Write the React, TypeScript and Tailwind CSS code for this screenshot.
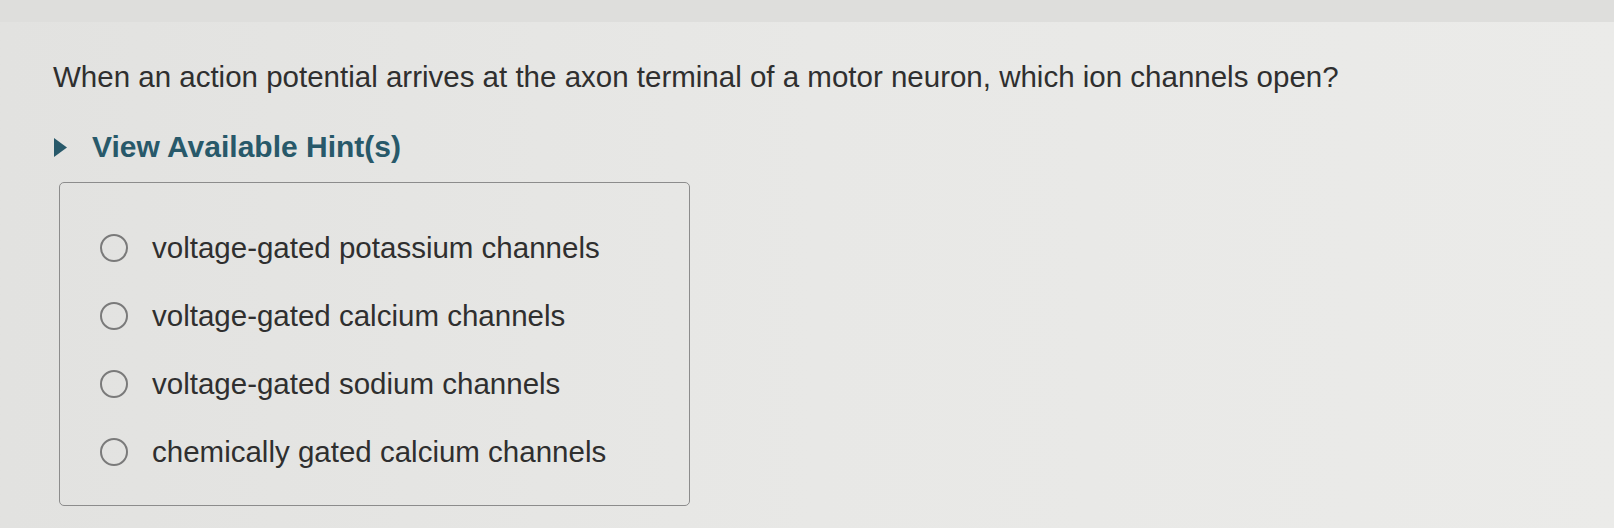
import { useState } from "react";

const options = [
    "voltage-gated potassium channels",
    "voltage-gated calcium channels",
    "voltage-gated sodium channels",
    "chemically gated calcium channels",
];

export default function App() {
    const [picked, setPicked] = useState<number | null>(null);
    const [hintOpen, setHintOpen] = useState(false);

    return (
        <div className="w-[1614px] h-[528px] overflow-hidden bg-gradient-to-r from-[#e2e2e0] via-[#e8e8e6] to-[#ebebe9] font-['Liberation_Sans',Arial,sans-serif] text-[#2f2f2f]">
            <div className="h-[22px] bg-[#dededc]" />
            <div className="pl-[53px] pt-[38px]">
                <p className="text-[29.5px] leading-[34px]">
                    When an action potential arrives at the axon terminal of a motor neuron, which ion channels open?
                </p>

                <button
                    onClick={() => setHintOpen((v) => !v)}
                    className="mt-[36px] flex items-center gap-[24px] text-[#28596a]"
                >
                    <svg width="15" height="21" viewBox="0 0 15 21" className="shrink-0">
                        <path d="M1 1 L14 10.5 L1 20 Z" fill="currentColor" />
                    </svg>
                    <span className="text-[30px] leading-[34px] font-bold">View Available Hint(s)</span>
                </button>

                <div className="mt-[18px] ml-[6px] w-[631px] h-[324px] border-[1.5px] border-[#8c8c8c] rounded-[5px] pt-[48px] pl-[40px]">
                    {options.map((opt, i) => (
                        <label
                            key={opt}
                            onClick={() => setPicked(i)}
                            className="flex items-center gap-[24px] h-[34px] mb-[34px] cursor-pointer"
                        >
                            <span className="w-[28px] h-[28px] rounded-full border-[2px] border-[#7a7a7a] flex items-center justify-center shrink-0">
                                {picked === i && <span className="w-[14px] h-[14px] rounded-full bg-[#28596a]" />}
                            </span>
                            <span className="text-[29.5px] leading-[34px]">{opt}</span>
                        </label>
                    ))}
                </div>
            </div>
        </div>
    );
}
